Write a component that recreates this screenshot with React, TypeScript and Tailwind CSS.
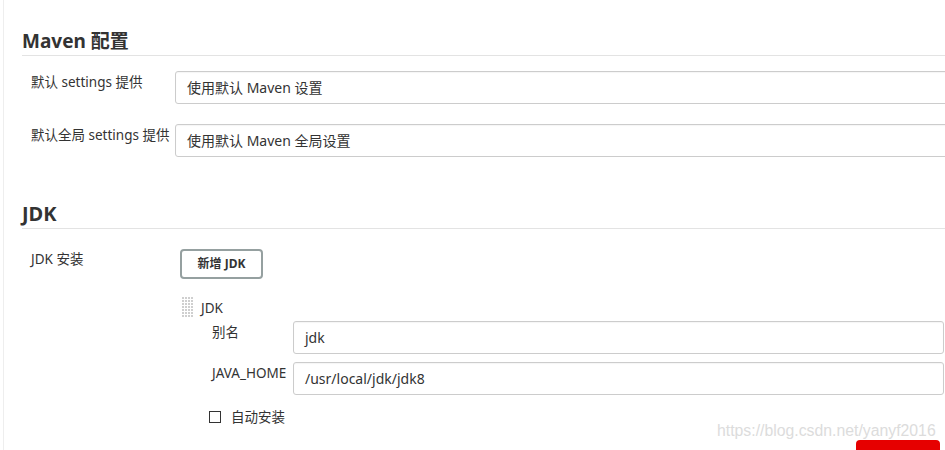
function Field({ value }: { value: string }) {
  return (
    <div className="h-[33px] flex-1 rounded-[3px] border border-[#ccc] bg-white px-[11px] flex items-center text-[14px] text-[#333] shadow-[inset_0_1px_1px_rgba(0,0,0,0.04)] whitespace-nowrap">
      {value}
    </div>
  );
}

function DragHandle() {
  const dots = [];
  for (let r = 0; r < 7; r++) {
    for (let c = 0; c < 4; c++) {
      dots.push(<rect key={`${r}-${c}`} x={c * 3} y={r * 3} width="2" height="2" fill="#cfcfcf" />);
    }
  }
  return (
    <svg width="12" height="21" viewBox="0 0 12 21" className="block">
      {dots}
    </svg>
  );
}

export default function App() {
  return (
    <div
      className="relative w-[945px] h-[450px] overflow-hidden bg-white text-[#333]"
      style={{ fontFamily: '"Noto Sans", "Noto Sans CJK SC", sans-serif' }}
    >
      <div className="ml-[3px] h-full border-l border-[#eee] pl-[18px] pt-[27px]">
        {/* Maven 配置 */}
        <h2 className="text-[19px] font-bold leading-[28px] border-b border-[#e3e3e3] whitespace-nowrap">Maven 配置</h2>

        <div className="mt-[15px] flex">
          <div className="w-[153px] shrink-0 pl-[9px] pt-[2px] text-[13.5px] leading-[18px] whitespace-nowrap">默认 settings 提供</div>
          <div className="w-[800px] shrink-0 flex">
            <Field value="使用默认 Maven 设置" />
          </div>
        </div>

        <div className="mt-[20px] flex">
          <div className="w-[153px] shrink-0 pl-[9px] pt-[2px] text-[13.5px] leading-[18px] whitespace-nowrap">默认全局 settings 提供</div>
          <div className="w-[800px] shrink-0 flex">
            <Field value="使用默认 Maven 全局设置" />
          </div>
        </div>

        {/* JDK */}
        <h2 className="mt-[43px] text-[20px] font-bold leading-[28px] border-b border-[#e3e3e3] whitespace-nowrap">JDK</h2>

        <div className="mt-[20px] flex">
          <div className="w-[153px] shrink-0 pl-[9px] pt-[1px] text-[13.5px] leading-[18px] whitespace-nowrap">JDK 安装</div>
          <div className="flex-1 pl-[5px]">
            <button className="h-[30px] w-[83px] rounded-[4px] border-2 border-[#95a0a0] bg-white text-[12px] font-bold text-[#333]">
              新增 JDK
            </button>

            <div className="mt-[18px] flex items-center gap-[7px] pl-[2px]">
              <DragHandle />
              <span className="text-[13.5px] leading-[18px]">JDK</span>
            </div>

            <div className="pl-[32px] pr-[1px]">
              <div className="mt-[3px] flex">
                <div className="w-[81px] shrink-0 pt-[2px] text-[13.5px] leading-[18px] whitespace-nowrap">别名</div>
                <Field value="jdk" />
              </div>
              <div className="mt-[8px] flex">
                <div className="w-[81px] shrink-0 pt-[2px] text-[13.5px] leading-[18px] whitespace-nowrap">JAVA_HOME</div>
                <Field value="/usr/local/jdk/jdk8" />
              </div>
              <label className="mt-[13px] -ml-[3px] flex items-center gap-[10px] text-[13.5px] leading-[18px]">
                <span className="block h-[12px] w-[12px] border-[1.5px] border-[#333] bg-white" />
                自动安装
              </label>
            </div>
          </div>
        </div>
      </div>

      {/* watermark */}
      <div
        className="absolute left-[717px] top-[420px] text-[15.8px] leading-[22px] text-[#dcdcdc] whitespace-nowrap"
        style={{ fontFamily: '"Liberation Sans", Arial, sans-serif' }}
      >
        https://blog.csdn.net/yanyf2016
      </div>
      <div className="absolute left-[856px] top-[440px] h-[12px] w-[84px] rounded-t-[4px] bg-[#e60000]" />
    </div>
  );
}
